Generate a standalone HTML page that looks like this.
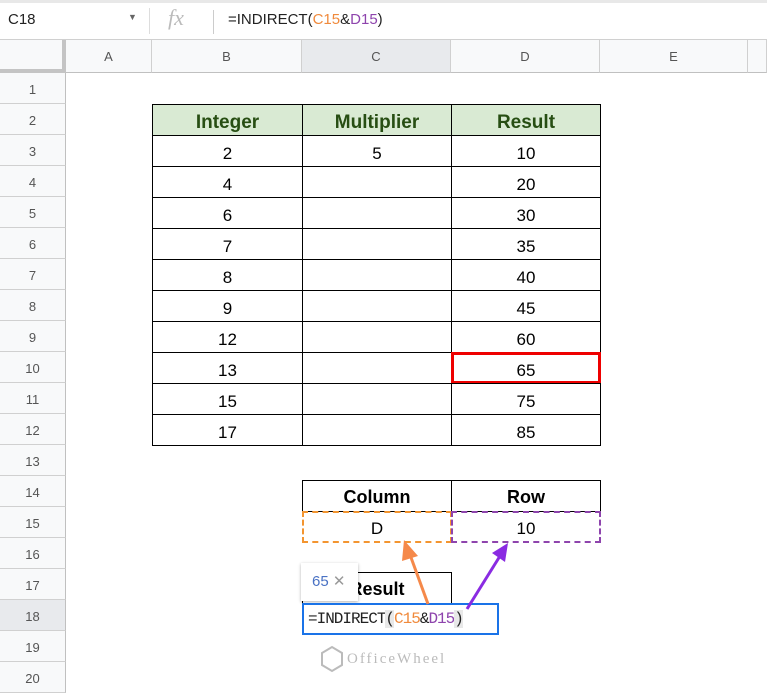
<!DOCTYPE html>
<html><head><style>
*{margin:0;padding:0;box-sizing:border-box}
body{width:767px;height:695px;position:relative;background:#fff;font-family:"Liberation Sans",Arial,sans-serif;overflow:hidden}
.a{position:absolute}
.rh{position:absolute;left:0;width:66px;height:31px;background:#f8f9fa;border-bottom:1px solid #d0d0d0;border-right:1px solid #c0c0c0;color:#555;font-size:13px;text-align:center;line-height:33px}
.ch{position:absolute;top:40px;height:33px;background:#f8f9fa;border-right:1px solid #d0d0d0;border-bottom:1px solid #c0c0c0;color:#555;font-size:13px;text-align:center;line-height:33px}
.c{position:absolute;height:32px;border:1px solid #000;text-align:center;line-height:36px;font-size:17px;color:#000}
.g{background:#d9ead3;color:#274e13;font-weight:bold;font-size:19px}
</style></head><body>
<div class="a" style="left:0;top:0;width:767px;height:3px;background:#e8e8e8"></div>
<div class="a" style="left:0;top:3px;width:767px;height:37px;background:#fff;border-bottom:1px solid #d0d0d0"></div>
<div class="a" style="left:8px;top:11px;font-size:15px;color:#222">C18</div>
<div class="a" style="left:128px;top:12px;font-size:9px;color:#666">▼</div>
<div class="a" style="left:149px;top:8px;width:1px;height:26px;background:#ddd"></div>
<div class="a" style="left:168px;top:5px;font-size:22px;color:#bbb;font-family:'Liberation Serif',serif;font-style:italic">fx</div>
<div class="a" style="left:213px;top:10px;width:1px;height:24px;background:#ccc"></div>
<div class="a" style="left:228px;top:11px;font-size:15px;color:#222">=INDIRECT(<span style="color:#f08a3c">C15</span>&amp;<span style="color:#8e44ad">D15</span>)</div>

<div class="a" style="left:0;top:40px;width:66px;height:33px;background:#f8f9fa;border-right:4px solid #c4c4c4;border-bottom:4px solid #c4c4c4"></div>
<div class="ch" style="left:66px;width:86px">A</div>
<div class="ch" style="left:152px;width:150px">B</div>
<div class="ch" style="left:302px;width:149px;background:#e8eaed">C</div>
<div class="ch" style="left:451px;width:149px">D</div>
<div class="ch" style="left:600px;width:148px">E</div>
<div class="ch" style="left:748px;width:19px"></div>

<div class="rh" style="top:73px">1</div><div class="rh" style="top:104px">2</div><div class="rh" style="top:135px">3</div><div class="rh" style="top:166px">4</div><div class="rh" style="top:197px">5</div><div class="rh" style="top:228px">6</div><div class="rh" style="top:259px">7</div><div class="rh" style="top:290px">8</div><div class="rh" style="top:321px">9</div><div class="rh" style="top:352px">10</div><div class="rh" style="top:383px">11</div><div class="rh" style="top:414px">12</div><div class="rh" style="top:445px">13</div><div class="rh" style="top:476px">14</div><div class="rh" style="top:507px">15</div><div class="rh" style="top:538px">16</div><div class="rh" style="top:569px">17</div><div class="rh" style="top:600px;background:#e8eaed">18</div><div class="rh" style="top:631px">19</div><div class="rh" style="top:662px">20</div>

<div class="c g" style="left:152px;top:104px;width:151px">Integer</div>
<div class="c g" style="left:302px;top:104px;width:150px">Multiplier</div>
<div class="c g" style="left:451px;top:104px;width:150px">Result</div>

<div class="c" style="left:152px;top:135px;width:151px">2</div><div class="c" style="left:302px;top:135px;width:150px">5</div><div class="c" style="left:451px;top:135px;width:150px">10</div>
<div class="c" style="left:152px;top:166px;width:151px">4</div><div class="c" style="left:302px;top:166px;width:150px"></div><div class="c" style="left:451px;top:166px;width:150px">20</div>
<div class="c" style="left:152px;top:197px;width:151px">6</div><div class="c" style="left:302px;top:197px;width:150px"></div><div class="c" style="left:451px;top:197px;width:150px">30</div>
<div class="c" style="left:152px;top:228px;width:151px">7</div><div class="c" style="left:302px;top:228px;width:150px"></div><div class="c" style="left:451px;top:228px;width:150px">35</div>
<div class="c" style="left:152px;top:259px;width:151px">8</div><div class="c" style="left:302px;top:259px;width:150px"></div><div class="c" style="left:451px;top:259px;width:150px">40</div>
<div class="c" style="left:152px;top:290px;width:151px">9</div><div class="c" style="left:302px;top:290px;width:150px"></div><div class="c" style="left:451px;top:290px;width:150px">45</div>
<div class="c" style="left:152px;top:321px;width:151px">12</div><div class="c" style="left:302px;top:321px;width:150px"></div><div class="c" style="left:451px;top:321px;width:150px">60</div>
<div class="c" style="left:152px;top:352px;width:151px">13</div><div class="c" style="left:302px;top:352px;width:150px"></div><div class="c" style="left:451px;top:352px;width:150px;border:3px solid #e00;line-height:32px">65</div>
<div class="c" style="left:152px;top:383px;width:151px">15</div><div class="c" style="left:302px;top:383px;width:150px"></div><div class="c" style="left:451px;top:383px;width:150px">75</div>
<div class="c" style="left:152px;top:414px;width:151px">17</div><div class="c" style="left:302px;top:414px;width:150px"></div><div class="c" style="left:451px;top:414px;width:150px">85</div>

<div class="c" style="left:302px;top:480px;width:150px;font-weight:bold;font-size:18px;line-height:32px">Column</div>
<div class="c" style="left:451px;top:480px;width:150px;font-weight:bold;font-size:18px;line-height:32px">Row</div>
<div class="c" style="left:302px;top:511px;width:150px;border:2px dashed #f39530;line-height:32px">D</div>
<div class="c" style="left:451px;top:511px;width:150px;border:2px dashed #8e44ad;line-height:32px">10</div>

<div class="c" style="left:302px;top:572px;width:150px;font-weight:bold;font-size:18px;line-height:32px">Result</div>
<div class="a" style="left:301px;top:563px;width:57px;height:38px;background:#fff;box-shadow:0 1px 3px rgba(0,0,0,.3);font-size:15px;color:#4a72c4;padding:9px 0 0 11px">65 <span style="color:#999">✕</span></div>
<div class="a" style="left:302px;top:603px;width:197px;height:32px;background:#fff;border:2px solid #1a73e8;font-size:16px;line-height:28px;padding-left:4px;color:#222;font-family:'Liberation Mono',monospace;letter-spacing:-1px">=INDIRECT<span style="background:#e8e8e8">(</span><span style="color:#f08a3c">C15</span>&amp;<span style="color:#8e44ad">D15</span><span style="background:#e8e8e8">)</span></div>

<svg class="a" style="left:0;top:0" width="767" height="695">
<line x1="428" y1="604" x2="409" y2="552" stroke="#f5894a" stroke-width="3"/>
<polygon points="404,540 402,561 418,556" fill="#f5894a"/>
<line x1="467" y1="609" x2="500" y2="556" stroke="#8a2be2" stroke-width="3"/>
<polygon points="508,543 492,553 505,562" fill="#8a2be2"/>
<path d="M322 653 l10 -6 l10 6 v12 l-10 6 l-10 -6z" fill="none" stroke="#bbb" stroke-width="2"/>
<text x="347" y="663" font-family="Liberation Serif,serif" font-size="15" fill="#bbb" letter-spacing="2">OfficeWheel</text>
</svg>
</body></html>
